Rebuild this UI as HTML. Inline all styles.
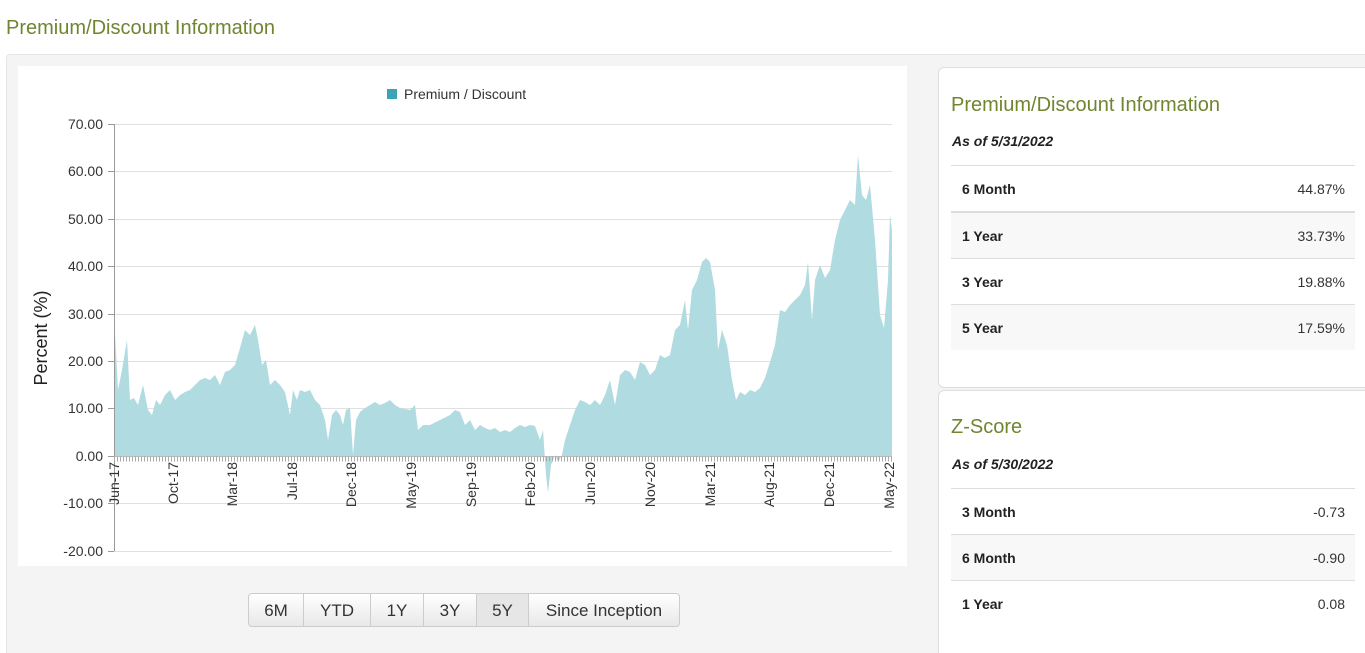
<!DOCTYPE html>
<html style="overflow:hidden;height:653px"><head><meta charset="utf-8"><style>
body{margin:0;width:1365px;height:653px;overflow:hidden;background:#fff;font-family:"Liberation Sans",Arial,sans-serif;position:relative}
.a{position:absolute}
.t{color:#6f8530}
.card{position:absolute;background:#fff;border:1px solid #ddd;border-radius:6px;left:938px;width:440px;box-sizing:border-box}
.row{position:absolute;left:951px;width:404px;height:45px;border-top:1px solid #ddd;font-size:14px;color:#222}
.row b{position:absolute;left:11px;top:15px}
.row span{position:absolute;right:10px;top:15px;color:#333}
.sh{background:#f8f8f8}
.btn{position:absolute;top:593px;height:34px;line-height:34px;text-align:center;font-size:17px;color:#333;background:linear-gradient(#fff,#e8e8e8);border:1px solid #ccc;box-sizing:border-box}
</style></head><body>
<div class="a t" style="left:6px;top:17px;font-size:20px">Premium/Discount Information</div>
<div class="a" style="left:6px;top:54px;width:1359px;height:599px;background:#f4f4f4;border-top:1px solid #e4e4e4;border-left:1px solid #e4e4e4;border-radius:4px 0 0 0;box-sizing:border-box"></div>
<div class="a" style="left:18px;top:66px;width:889px;height:500px;background:#fff"></div>
<svg class="a" style="left:0;top:0" width="910" height="570">
<g stroke="#e0e0e0" stroke-width="1">
<line x1="114" x2="892" y1="124.5" y2="124.5"/><line x1="114" x2="892" y1="171.5" y2="171.5"/><line x1="114" x2="892" y1="219.5" y2="219.5"/><line x1="114" x2="892" y1="266.5" y2="266.5"/><line x1="114" x2="892" y1="314.5" y2="314.5"/><line x1="114" x2="892" y1="361.5" y2="361.5"/><line x1="114" x2="892" y1="408.5" y2="408.5"/><line x1="114" x2="892" y1="503.5" y2="503.5"/><line x1="114" x2="892" y1="551.5" y2="551.5"/>
</g>
<path fill="#b0dbe1" d="M114,456 L114,314 118,390 122,370 127,340 130,400 134,398 138,405 143,385 148,410 152,415 156,400 160,405 165,395 170,390 175,400 180,395 185,392 190,390 195,385 200,380 205,378 210,380 215,375 220,385 225,372 230,370 235,365 240,348 245,330 250,335 255,325 258,340 262,365 266,360 270,385 275,380 280,385 285,392 290,415 293,390 297,400 300,390 305,392 310,390 315,400 320,405 325,420 328,440 332,415 336,410 340,415 343,425 346,410 350,408 353,455 356,420 360,412 365,408 370,405 375,402 380,405 385,403 390,400 395,405 400,408 410,410 415,405 418,430 423,425 430,425 440,420 450,415 455,410 460,412 465,425 470,420 475,430 480,425 485,428 490,430 495,428 500,432 505,430 510,432 515,428 520,425 525,427 530,425 535,426 540,440 543,430 546,475 548,493 551,465 555,455 558,462 562,455 565,440 570,425 575,410 580,400 585,402 590,405 595,400 600,405 605,395 610,380 615,405 620,375 625,370 630,372 635,380 640,362 645,365 650,375 655,370 660,355 665,358 670,355 675,330 680,325 685,300 688,330 692,290 697,280 702,262 706,258 710,262 715,290 718,350 722,330 727,345 732,380 736,400 740,392 745,395 750,390 755,392 760,388 765,378 770,362 775,345 780,310 785,312 790,305 795,300 800,295 805,285 808,262 812,320 815,280 820,265 825,278 830,270 835,240 840,220 845,210 850,200 855,205 858,155 862,195 866,200 870,185 875,240 880,315 884,328 888,280 890,215 892,230 892,456 Z"/>
<line x1="114.5" x2="114.5" y1="124" y2="551" stroke="#999"/>
<line x1="114" x2="892" y1="456.5" y2="456.5" stroke="#bbb"/>
<line x1="114" x2="892" y1="459" y2="459" stroke="#aaa" stroke-width="5" stroke-dasharray="1 2"/>
<g stroke="#999"><line x1="108" x2="114" y1="124.5" y2="124.5"/><line x1="108" x2="114" y1="171.5" y2="171.5"/><line x1="108" x2="114" y1="219.5" y2="219.5"/><line x1="108" x2="114" y1="266.5" y2="266.5"/><line x1="108" x2="114" y1="314.5" y2="314.5"/><line x1="108" x2="114" y1="361.5" y2="361.5"/><line x1="108" x2="114" y1="408.5" y2="408.5"/><line x1="108" x2="114" y1="456.5" y2="456.5"/><line x1="108" x2="114" y1="503.5" y2="503.5"/><line x1="108" x2="114" y1="551.5" y2="551.5"/></g>
<g font-family="Liberation Sans,Arial" font-size="14" fill="#333" text-anchor="end">
<text x="103" y="129">70.00</text><text x="103" y="176">60.00</text><text x="103" y="224">50.00</text><text x="103" y="271">40.00</text><text x="103" y="319">30.00</text><text x="103" y="366">20.00</text><text x="103" y="413">10.00</text><text x="103" y="461">0.00</text><text x="103" y="508">-10.00</text><text x="103" y="556">-20.00</text>
</g>
<text x="0" y="0" transform="translate(47,338) rotate(-90)" text-anchor="middle" font-family="Liberation Sans,Arial" font-size="18" fill="#222">Percent (%)</text>
<g font-family="Liberation Sans,Arial" font-size="14" fill="#333" text-anchor="end">
<text transform="translate(119,462) rotate(-90)">Jun-17</text><text transform="translate(178,462) rotate(-90)">Oct-17</text><text transform="translate(237,462) rotate(-90)">Mar-18</text><text transform="translate(297,462) rotate(-90)">Jul-18</text><text transform="translate(356,462) rotate(-90)">Dec-18</text><text transform="translate(416,462) rotate(-90)">May-19</text><text transform="translate(476,462) rotate(-90)">Sep-19</text><text transform="translate(535,462) rotate(-90)">Feb-20</text><text transform="translate(595,462) rotate(-90)">Jun-20</text><text transform="translate(655,462) rotate(-90)">Nov-20</text><text transform="translate(715,462) rotate(-90)">Mar-21</text><text transform="translate(774,462) rotate(-90)">Aug-21</text><text transform="translate(834,462) rotate(-90)">Dec-21</text><text transform="translate(894,462) rotate(-90)">May-22</text>
</g>
<rect x="387" y="89" width="10" height="10" fill="#3aa3b6"/>
<text x="404" y="99" font-family="Liberation Sans,Arial" font-size="14" fill="#333">Premium / Discount</text>
</svg>
<div class="btn" style="left:248px;width:56px;border-radius:4px 0 0 4px">6M</div>
<div class="btn" style="left:303px;width:68px">YTD</div>
<div class="btn" style="left:370px;width:54px">1Y</div>
<div class="btn" style="left:423px;width:54px">3Y</div>
<div class="btn" style="left:476px;width:53px;background:#e6e6e6">5Y</div>
<div class="btn" style="left:528px;width:152px;border-radius:0 4px 4px 0">Since Inception</div>

<div class="card" style="top:67px;height:321px"></div>
<div class="card" style="top:390px;height:263px;border-bottom:none;border-radius:6px 6px 0 0"></div>
<div class="a t" style="left:951px;top:94px;font-size:20px">Premium/Discount Information</div>
<div class="a" style="left:952px;top:133px;font-size:14px;font-weight:bold;font-style:italic;color:#222">As of 5/31/2022</div>
<div class="row" style="top:165px"><b>6 Month</b><span>44.87%</span></div>
<div class="row sh" style="top:211px;border-top:2px solid #ddd;height:46px"><b>1 Year</b><span>33.73%</span></div>
<div class="row" style="top:258px"><b>3 Year</b><span>19.88%</span></div>
<div class="row sh" style="top:304px"><b>5 Year</b><span>17.59%</span></div>
<div class="a t" style="left:951px;top:416px;font-size:20px">Z-Score</div>
<div class="a" style="left:952px;top:456px;font-size:14px;font-weight:bold;font-style:italic;color:#222">As of 5/30/2022</div>
<div class="row" style="top:488px"><b>3 Month</b><span>-0.73</span></div>
<div class="row sh" style="top:534px"><b>6 Month</b><span>-0.90</span></div>
<div class="row" style="top:580px"><b>1 Year</b><span>0.08</span></div>
</body></html>
